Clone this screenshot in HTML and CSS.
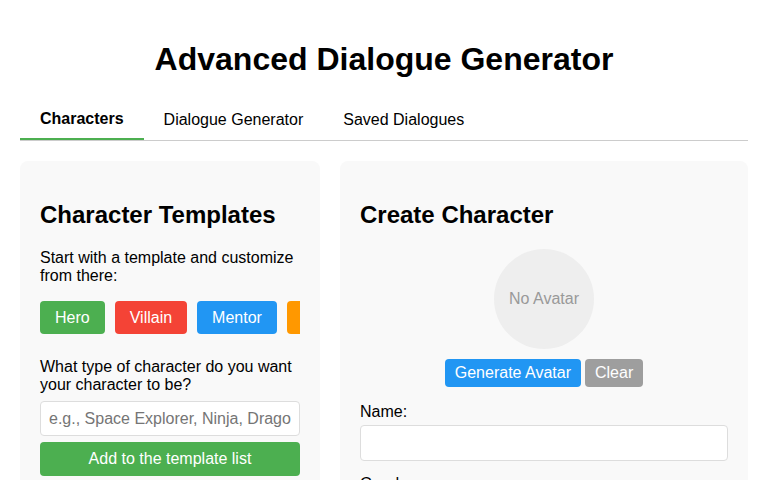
FILE: index.html
```html
<!DOCTYPE html>
<html>
<head>
<meta charset="utf-8">
<link rel="stylesheet" href="styles.css">
</head>
<body>
<div class="container">
  <h1>Advanced Dialogue Generator</h1>
  <div class="tabs">
    <div class="tab active">Characters</div>
    <div class="tab">Dialogue Generator</div>
    <div class="tab">Saved Dialogues</div>
  </div>
  <div class="columns">
    <div class="panel left">
      <h2>Character Templates</h2>
      <p>Start with a template and customize from there:</p>
      <div class="templates">
        <button class="tpl green">Hero</button>
        <button class="tpl red">Villain</button>
        <button class="tpl blue">Mentor</button>
        <button class="tpl orange">Sidekick</button>
        <button class="tpl purple">Rival</button>
      </div>
      <label class="lbl">What type of character do you want your character to be?</label>
      <input class="field" type="text" placeholder="e.g., Space Explorer, Ninja, Dragon Tamer">
      <button class="add">Add to the template list</button>
    </div>
    <div class="panel right">
      <h2>Create Character</h2>
      <div class="avatar-wrap">
        <div class="avatar">No Avatar</div>
        <div class="avatar-btns">
          <button class="small blue">Generate Avatar</button>
          <button class="small gray">Clear</button>
        </div>
      </div>
      <label class="lbl2">Name:</label>
      <input class="field" type="text">
      <label class="lbl2">Gender:</label>
      <input class="field" type="text">
    </div>
  </div>
</div>
</body>
</html>
```

FILE: styles.css
```css
* { box-sizing: border-box; }
body {
  margin: 0;
  font-family: "Liberation Sans", Arial, sans-serif;
  color: #000;
  background: #fff;
}
.container { padding: 20px; }
h1 {
  text-align: center;
  font-size: 32px;
  margin: 21px 0 22px;
  line-height: 37px;
}
.tabs {
  display: flex;
  border-bottom: 1px solid #ccc;
  margin-bottom: 20px;
}
.tab {
  padding: 11px 20px 9px;
  font-size: 16px;
  line-height: 18px;
  border-bottom: 2px solid transparent;
}
.tab.active {
  font-weight: bold;
  border-bottom-color: #4caf50;
  padding-top: 10px;
  padding-bottom: 10px;
}
.columns {
  display: flex;
  gap: 20px;
  align-items: flex-start;
}
.panel {
  background: #f9f9f9;
  border-radius: 8px;
  padding: 20px;
  min-height: 340px;
}
.left { width: 300px; flex: none; }
.right { flex: 1; }
h2 {
  font-size: 24px;
  line-height: 28px;
  margin: 20px 0;
}
p {
  margin: 0 0 16px;
  font-size: 16px;
  line-height: 18px;
}
.templates {
  display: flex;
  gap: 10px;
  overflow: hidden;
  margin-bottom: 24px;
}
button {
  font-family: "Liberation Sans", Arial, sans-serif;
  font-size: 16px;
  line-height: 18px;
  color: #fff;
  border: none;
  border-radius: 4px;
}
.tpl {
  flex: none;
  padding: 7.5px 15px;
}
.green { background: #4caf50; }
.red { background: #f44336; }
.blue { background: #2196f3; }
.orange { background: #ff9800; }
.purple { background: #9c27b0; }
.gray { background: #9e9e9e; }
.lbl {
  display: block;
  font-size: 16px;
  line-height: 18px;
  margin-bottom: 7px;
}
.field {
  display: block;
  width: 100%;
  height: 35px;
  border: 1px solid #ddd;
  border-radius: 4px;
  background: #fff;
  padding: 8px;
  font-family: "Liberation Sans", Arial, sans-serif;
  font-size: 16px;
}
.field::placeholder { color: #757575; }
.right .field { height: 36px; margin-bottom: 14px; }
.add {
  display: block;
  width: 100%;
  margin-top: 6px;
  padding: 8px;
  background: #4caf50;
}
.avatar-wrap {
  display: flex;
  flex-direction: column;
  align-items: center;
  gap: 10px;
  margin-bottom: 16px;
}
.avatar {
  width: 100px;
  height: 100px;
  border-radius: 50%;
  background: #eee;
  color: #999;
  font-size: 16px;
  display: flex;
  align-items: center;
  justify-content: center;
}
.avatar-btns { display: flex; gap: 4px; }
.small { padding: 5px 10px; }
.lbl2 {
  display: block;
  font-size: 16px;
  line-height: 18px;
  margin-bottom: 4px;
}
```
